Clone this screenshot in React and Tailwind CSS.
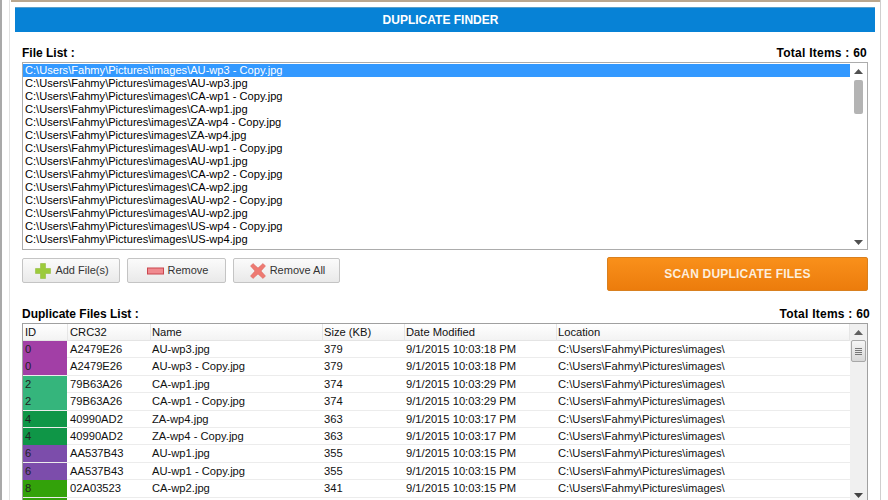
const UI_FONT = 'font-["Liberation_Sans",Arial,sans-serif]';

const FILES = [
  'AU-wp3 - Copy.jpg', 'AU-wp3.jpg', 'CA-wp1 - Copy.jpg', 'CA-wp1.jpg', 'ZA-wp4 - Copy.jpg',
  'ZA-wp4.jpg', 'AU-wp1 - Copy.jpg', 'AU-wp1.jpg', 'CA-wp2 - Copy.jpg', 'CA-wp2.jpg',
  'AU-wp2 - Copy.jpg', 'AU-wp2.jpg', 'US-wp4 - Copy.jpg', 'US-wp4.jpg',
];

const ROWS = [
  { id: '0', color: 'bg-[#a23fa6]', crc: 'A2479E26', name: 'AU-wp3.jpg', size: '379', date: '9/1/2015 10:03:18 PM' },
  { id: '0', color: 'bg-[#a23fa6]', crc: 'A2479E26', name: 'AU-wp3 - Copy.jpg', size: '379', date: '9/1/2015 10:03:18 PM' },
  { id: '2', color: 'bg-[#35b57c]', crc: '79B63A26', name: 'CA-wp1.jpg', size: '374', date: '9/1/2015 10:03:29 PM' },
  { id: '2', color: 'bg-[#35b57c]', crc: '79B63A26', name: 'CA-wp1 - Copy.jpg', size: '374', date: '9/1/2015 10:03:29 PM' },
  { id: '4', color: 'bg-[#0f9647]', crc: '40990AD2', name: 'ZA-wp4.jpg', size: '363', date: '9/1/2015 10:03:17 PM' },
  { id: '4', color: 'bg-[#0f9647]', crc: '40990AD2', name: 'ZA-wp4 - Copy.jpg', size: '363', date: '9/1/2015 10:03:17 PM' },
  { id: '6', color: 'bg-[#7c4dab]', crc: 'AA537B43', name: 'AU-wp1.jpg', size: '355', date: '9/1/2015 10:03:15 PM' },
  { id: '6', color: 'bg-[#7c4dab]', crc: 'AA537B43', name: 'AU-wp1 - Copy.jpg', size: '355', date: '9/1/2015 10:03:15 PM' },
  { id: '8', color: 'bg-[#33a20a]', crc: '02A03523', name: 'CA-wp2.jpg', size: '341', date: '9/1/2015 10:03:15 PM' },
  { id: '', color: 'bg-[#33a20a]', crc: '', name: '', size: '', date: '' },
];

const COLS = 'grid grid-cols-[45px_83px_172px_82px_152px_1fr]';

function Heading({ left, right }) {
  return (
    <div className="flex items-center justify-between h-[13px] font-bold text-[12px] text-black whitespace-nowrap">
      <span>{left}</span>
      <span className="tracking-[0.25px]">{right}</span>
    </div>
  );
}

function ToolButton({ icon, label, width }) {
  return (
    <button className={`${width} h-[25px] pl-[2px] flex items-center justify-center gap-[4px] rounded-[2px] border border-[#c4c4c4] bg-gradient-to-b from-[#fbfbfb] to-[#e9e9e9] text-[11px] text-[#333]`}>
      {icon}
      {label}
    </button>
  );
}

function PlusIcon() {
  return (
    <svg width="16" height="16" viewBox="0 0 16 16">
      <path d="M5.5 0.5h5v5h5v5h-5v5h-5v-5h-5v-5h5z" fill="#9ccb3b" stroke="#8ab52e" strokeWidth="0.5" />
    </svg>
  );
}

function MinusIcon() {
  return (
    <svg width="17" height="8" viewBox="0 0 17 8">
      <rect x="0.5" y="1" width="16" height="6" fill="#f08a8f" stroke="#c9474f" />
    </svg>
  );
}

function CrossIcon() {
  return (
    <svg width="16" height="16" viewBox="0 0 16 16">
      <path d="M3 0.5 8 5l5-4.5L15.5 3 11 8l4.5 5-2.5 2.5L8 11l-5 4.5L0.5 13 5 8 0.5 3z" fill="#ee7a72" stroke="#d9635c" strokeWidth="0.5" />
    </svg>
  );
}

function ArrowUp({ color }) {
  return (
    <svg width="9" height="5" viewBox="0 0 9 5" className="shrink-0">
      <path d="M4.5 0 9 5H0z" fill={color} />
    </svg>
  );
}

function ArrowDown({ color }) {
  return (
    <svg width="9" height="5" viewBox="0 0 9 5" className="shrink-0">
      <path d="M0 0h9L4.5 5z" fill={color} />
    </svg>
  );
}

export default function App() {
  return (
    <div className={`${UI_FONT} w-[888px] h-[500px] overflow-hidden bg-white flex`}>
      <div className="w-[2px] bg-[#a9a9a9]" />
      <div className="w-px ml-[7px] bg-[#e2e2e2]" />
      <div className="w-[871px] border-r border-[#cfcfcf] pl-[5px] flex flex-col">
        {/* window top edge */}
        <div className="h-[2px] shrink-0 ml-[-4px] bg-[#b9a78f]" />
        <div className="h-[5px] shrink-0" />

        <div className="h-[25px] shrink-0 w-[860px] bg-[#0782d6] border-t border-[#5b9fc9] flex items-center justify-center pr-[9px] text-white font-bold text-[12px]">
          DUPLICATE FINDER
        </div>

        <div className="ml-[7px] w-[846px] flex flex-col">
          <div className="h-[13px] mt-[14px] shrink-0">
            <Heading left="File List :" right={<span className="mr-[1px]">Total Items : 60</span>} />
          </div>

          {/* file list */}
          <div className="mt-[3px] h-[188px] shrink-0 border border-[#acacac] flex overflow-hidden">
            <div className="flex-1 pt-[1px] text-[11.1px] text-black">
              {FILES.map((f, i) => (
                <div key={f} className={`h-[13px] leading-[13px] pl-[2px] whitespace-nowrap ${i === 0 ? 'bg-[#3399ff] text-white' : ''}`}>
                  {`C:\\Users\\Fahmy\\Pictures\\images\\${f}`}
                </div>
              ))}
            </div>
            <div className="w-[17px] flex flex-col items-center pt-[6px] pb-[4px]">
              <ArrowUp color="#505050" />
              <div className="w-[9px] h-[34px] mt-[6px] rounded-[2px] bg-[#b4b4b4]" />
              <div className="flex-1" />
              <ArrowDown color="#505050" />
            </div>
          </div>

          {/* buttons */}
          <div className="flex items-start mt-[7px] h-[34px] shrink-0">
            <div className="flex gap-[7px] mt-[1px]">
              <ToolButton icon={<PlusIcon />} label="Add File(s)" width="w-[98px]" />
              <ToolButton icon={<MinusIcon />} label="Remove" width="w-[99px]" />
              <ToolButton icon={<CrossIcon />} label="Remove All" width="w-[107px]" />
            </div>
            <button className="ml-auto w-[261px] h-[34px] rounded-[2px] bg-gradient-to-b from-[#f9901a] to-[#ec7c0c] border border-[#d9801f] text-[#fdeedd] font-bold text-[12px] tracking-[0.2px]">
              SCAN DUPLICATE FILES
            </button>
          </div>

          <div className="mt-[16px] h-[13px] shrink-0">
            <Heading left="Duplicate Files List :" right={<span className="-mr-[2px]">Total Items : 60</span>} />
          </div>

          {/* duplicate table */}
          <div className="mt-[3px] h-[180px] shrink-0 border border-[#a0a0a0] flex overflow-hidden">
            <div className="flex-1 text-[11.2px] text-[#111]">
              <div className={`${COLS} h-[17px] items-center bg-gradient-to-b from-white to-[#f3f3f3] border-b border-[#e4e4e4]`}>
                {['ID', 'CRC32', 'Name', 'Size (KB)', 'Date Modified', 'Location'].map((h, i) => (
                  <div key={h} className={`${i < 2 ? 'pl-[2px]' : 'pl-[1px]'} h-full flex items-center border-r border-[#e6e6e6]`}>{h}</div>
                ))}
              </div>
              {ROWS.map((r, i) => (
                <div key={i} className={`${COLS} h-[17.4px] items-stretch border-b border-[#ececec]`}>
                  <div className={`${r.color} pl-[2px] flex items-center text-[#222] mr-[1px]`}>{r.id}</div>
                  <div className="pl-[2px] flex items-center">{r.crc}</div>
                  <div className="pl-[1px] flex items-center">{r.name}</div>
                  <div className="pl-[1px] flex items-center">{r.size}</div>
                  <div className="pl-[1px] flex items-center">{r.date}</div>
                  <div className="pl-[1px] flex items-center">{r.crc ? 'C:\\Users\\Fahmy\\Pictures\\images\\' : ''}</div>
                </div>
              ))}
            </div>
            <div className="w-[17px] bg-[#f0f0f0] flex flex-col items-center pt-[6px] pb-[4px]">
              <ArrowUp color="#606060" />
              <div className="w-[15px] h-[22px] mt-[5px] rounded-[2px] border border-[#a8a8a8] bg-gradient-to-b from-[#f6f6f6] to-[#d8d8d8] flex flex-col items-center justify-center gap-[1px]">
                <div className="w-[7px] h-px bg-[#777]" />
                <div className="w-[7px] h-px bg-[#777]" />
                <div className="w-[7px] h-px bg-[#777]" />
                <div className="w-[7px] h-px bg-[#777]" />
              </div>
              <div className="flex-1" />
              <ArrowDown color="#444" />
            </div>
          </div>
        </div>
      </div>
    </div>
  );
}
